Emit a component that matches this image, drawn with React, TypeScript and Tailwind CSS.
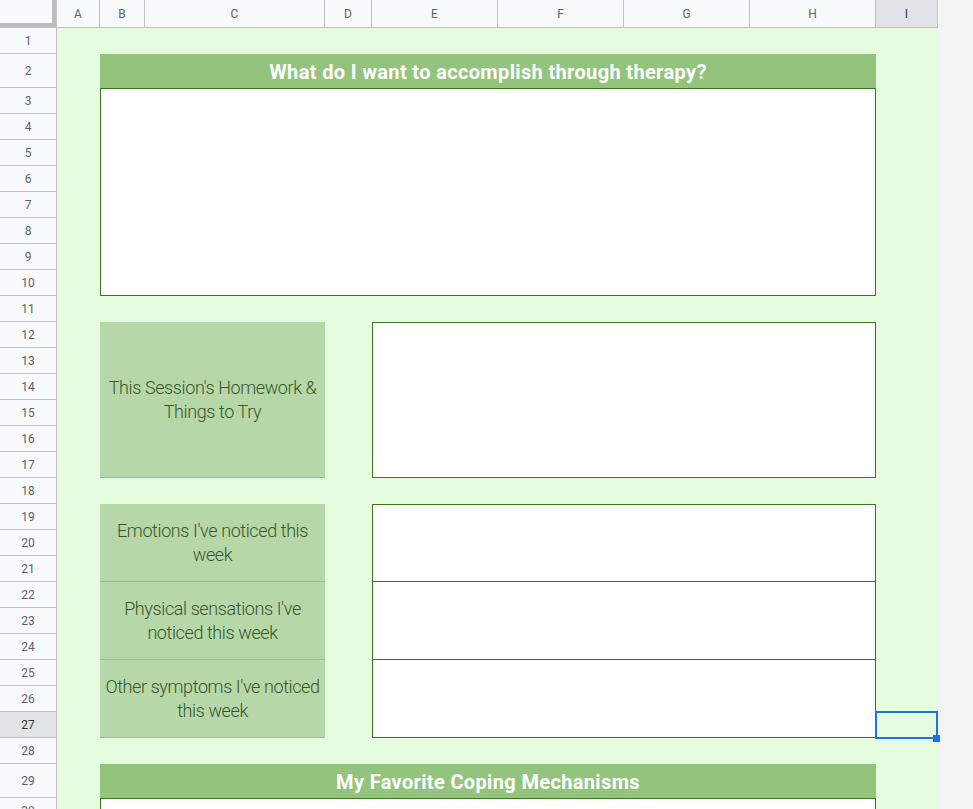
const COLUMNS = [
  { label: "A", cls: "w-[43px]" },
  { label: "B", cls: "w-[45px]" },
  { label: "C", cls: "w-[180px]" },
  { label: "D", cls: "w-[47px]" },
  { label: "E", cls: "w-[126px]" },
  { label: "F", cls: "w-[126px]" },
  { label: "G", cls: "w-[126px]" },
  { label: "H", cls: "w-[126px]" },
  { label: "I", cls: "w-[62px]", active: true },
];

const ROWS = Array.from({ length: 31 }, (_, i) => i + 1);

function ColumnHeaders() {
  return (
    <div className="flex h-[28px] shrink-0">
      <div className="w-[57px] h-[28px] bg-[#f8f9fa] border-r border-b border-[#c0c0c0]">
        <div className="w-[56px] h-[27px] border-r-4 border-b-4 border-[#bdbdbd]" />
      </div>
      {COLUMNS.map((c) => (
        <div
          key={c.label}
          className={`${c.cls} h-[28px] flex items-center justify-center border-r border-b border-[#c0c0c0] text-[12px] ${
            c.active ? "bg-[#e1e3e6] text-[#333]" : "bg-[#f8f9fa] text-[#5f6368]"
          }`}
        >
          {c.label}
        </div>
      ))}
      <div className="flex-1 bg-[#f3f3f3]" />
    </div>
  );
}

function RowHeaders() {
  return (
    <div className="w-[57px] shrink-0 flex flex-col bg-[#f8f9fa] border-r border-[#c0c0c0]">
      {ROWS.map((n) => (
        <div
          key={n}
          className={`${n === 2 || n === 29 ? "h-[34px]" : "h-[26px]"} shrink-0 flex items-center justify-center border-b border-[#c0c0c0] text-[12px] ${
            n === 27 ? "bg-[#e1e3e6] text-[#333]" : "text-[#5f6368]"
          }`}
        >
          {n}
        </div>
      ))}
    </div>
  );
}

function Header({ text, rows }: { text: string; rows: string }) {
  return (
    <div
      className={`col-[2/9] ${rows} bg-[#93c47d] flex items-center justify-center text-white font-bold text-[20px] tracking-[0.35px] whitespace-nowrap pt-[1px]`}
    >
      {text}
    </div>
  );
}

function Label({ lines, rows }: { lines: string[]; rows: string }) {
  return (
    <div
      className={`col-[2/4] ${rows} bg-[#b6d7a8] border-b border-[#93c47d] flex flex-col items-center justify-center text-[#38562a] font-light text-[18px] leading-[24px] tracking-[-0.4px] text-center whitespace-nowrap pt-[1px]`}
    >
      {lines.map((l) => (
        <span key={l}>{l}</span>
      ))}
    </div>
  );
}

export default function App() {
  return (
    <div className="w-[973px] h-[809px] overflow-hidden flex flex-col bg-white font-['Roboto',sans-serif]">
      <ColumnHeaders />
      <div className="flex flex-1 min-h-0">
        <RowHeaders />
        <div className="flex-1 grid grid-cols-[43px_45px_180px_47px_126px_126px_126px_126px_62px_1fr] grid-rows-[26px_34px_repeat(26,26px)_34px_26px_26px]">
          <div className="col-[1/10] row-[1/32] bg-[#e6fcdf]" />
          <div className="col-[10/11] row-[1/32] bg-[#f3f3f3]" />

          <Header text="What do I want to accomplish through therapy?" rows="row-[2/3]" />
          <div className="col-[2/9] row-[3/11] bg-white border border-[#38761d]" />

          <Label lines={["This Session's Homework &", "Things to Try"]} rows="row-[12/18]" />
          <div className="col-[5/9] row-[12/18] bg-white border border-[#38761d]" />

          <Label lines={["Emotions I've noticed this", "week"]} rows="row-[19/22]" />
          <div className="col-[5/9] row-[19/22] bg-white border border-[#38761d]" />
          <Label lines={["Physical sensations I've", "noticed this week"]} rows="row-[22/25]" />
          <div className="col-[5/9] row-[22/25] bg-white border-x border-b border-[#38761d]" />
          <Label lines={["Other symptoms I've noticed", "this week"]} rows="row-[25/28]" />
          <div className="col-[5/9] row-[25/28] bg-white border-x border-b border-[#38761d]" />

          <Header text="My Favorite Coping Mechanisms" rows="row-[29/30]" />
          <div className="col-[2/9] row-[30/33] bg-white border border-[#38761d]" />

          <div className="col-[9/10] row-[27/28] relative border-2 border-[#1a73e8] -ml-[1px] -mt-[1px] -mb-[1px]">
            <div className="absolute -right-[4px] -bottom-[5px] w-[7px] h-[7px] bg-[#1a73e8]" />
          </div>
        </div>
      </div>
    </div>
  );
}
